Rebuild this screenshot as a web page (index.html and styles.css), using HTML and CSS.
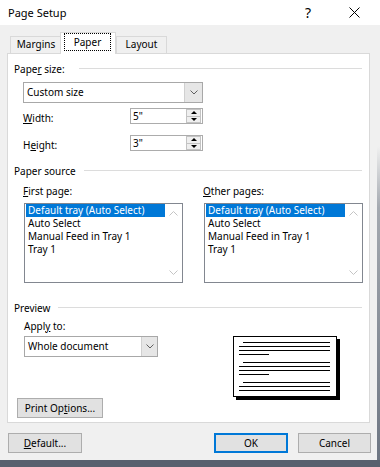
FILE: index.html
```html
<!DOCTYPE html>
<html lang="en">
<head>
<meta charset="utf-8">
<title>Page Setup</title>
<link rel="stylesheet" href="styles.css">
</head>
<body>
<div class="dialog">
  <div class="titlebar">
    <span class="title">Page Setup</span>
    <div class="caption-btns">
      <span class="cap-btn help">?</span>
      <span class="cap-btn close"><svg width="11" height="11" viewBox="0 0 11 11"><path d="M0.5 0.5L10.5 10.5M10.5 0.5L0.5 10.5" stroke="#000" stroke-width="1" fill="none"/></svg></span>
    </div>
  </div>
  <div class="main">
    <div class="tabs">
      <div class="tab tab-margins">Margins</div>
      <div class="tab tab-paper active"><span class="focus">Paper</span></div>
      <div class="tab tab-layout">Layout</div>
    </div>
    <div class="panel">
      <div class="group-head"><span>Pape<u>r</u> size:</span><i class="rule rule-wide"></i></div>
      <div class="combo combo-size">
        <span class="combo-text">Custom size</span>
        <span class="combo-btn"><svg width="8" height="5" viewBox="0 0 8 5"><path d="M0.5 0.5L4 4L7.5 0.5" stroke="#606060" fill="none"/></svg></span>
      </div>
      <div class="field-row row-width">
        <span class="field-label"><u>W</u>idth:</span>
        <div class="spin">
          <span class="spin-text">5&quot;</span>
          <span class="spin-btns"><span class="spin-btn"><i class="tri-up"></i></span><span class="spin-btn"><i class="tri-down"></i></span></span>
        </div>
      </div>
      <div class="field-row row-height">
        <span class="field-label">H<u>e</u>ight:</span>
        <div class="spin">
          <span class="spin-text">3&quot;</span>
          <span class="spin-btns"><span class="spin-btn"><i class="tri-up"></i></span><span class="spin-btn"><i class="tri-down"></i></span></span>
        </div>
      </div>

      <div class="group-head head-source"><span>Paper source</span><i class="rule"></i></div>
      <div class="source-cols">
        <div class="source-col">
          <div class="sub-label"><u>F</u>irst page:</div>
          <div class="list">
            <div class="list-items">
              <div class="item sel">Default tray (Auto Select)</div>
              <div class="item">Auto Select</div>
              <div class="item">Manual Feed in Tray 1</div>
              <div class="item">Tray 1</div>
            </div>
            <div class="vscroll">
              <svg width="9" height="5" viewBox="0 0 9 5"><path d="M0.5 4.5L4.5 0.5L8.5 4.5" stroke="#c4c4c4" fill="none"/></svg>
              <svg width="9" height="5" viewBox="0 0 9 5"><path d="M0.5 0.5L4.5 4.5L8.5 0.5" stroke="#c4c4c4" fill="none"/></svg>
            </div>
          </div>
        </div>
        <div class="source-col">
          <div class="sub-label"><u>O</u>ther pages:</div>
          <div class="list">
            <div class="list-items">
              <div class="item sel">Default tray (Auto Select)</div>
              <div class="item">Auto Select</div>
              <div class="item">Manual Feed in Tray 1</div>
              <div class="item">Tray 1</div>
            </div>
            <div class="vscroll">
              <svg width="9" height="5" viewBox="0 0 9 5"><path d="M0.5 4.5L4.5 0.5L8.5 4.5" stroke="#c4c4c4" fill="none"/></svg>
              <svg width="9" height="5" viewBox="0 0 9 5"><path d="M0.5 0.5L4.5 4.5L8.5 0.5" stroke="#c4c4c4" fill="none"/></svg>
            </div>
          </div>
        </div>
      </div>

      <div class="group-head head-preview"><span>Preview</span><i class="rule"></i></div>
      <div class="preview-row">
        <div class="preview-left">
          <div class="apply-label">Appl<u>y</u> to:</div>
          <div class="combo combo-apply">
            <span class="combo-text">Whole document</span>
            <span class="combo-btn"><svg width="8" height="5" viewBox="0 0 8 5"><path d="M0.5 0.5L4 4L7.5 0.5" stroke="#606060" fill="none"/></svg></span>
          </div>
          <div class="btn btn-print">Print Op<u>t</u>ions...</div>
        </div>
        <div class="preview-page">
          <svg width="102" height="59" viewBox="0 0 102 59" shape-rendering="crispEdges">
            <g stroke="#000" stroke-width="1">
              <path d="M9 5.5H96M5 9.5H96M5 13.5H96M5 17.5H35"/>
              <path d="M9 25.5H96M5 29.5H96M5 33.5H96M5 37.5H35"/>
              <path d="M9 45.5H96M5 49.5H96M5 53.5H96"/>
            </g>
          </svg>
        </div>
      </div>
    </div>
    <div class="footer">
      <div class="btn btn-default"><u>D</u>efault...</div>
      <div class="btn btn-ok">OK</div>
      <div class="btn btn-cancel">Cancel</div>
    </div>
  </div>
</div>
</body>
</html>
```

FILE: styles.css
```css
html, body {
  margin: 0;
  padding: 0;
}

body {
  width: 380px;
  height: 467px;
  overflow: hidden;
  background: #58606e;
  font-family: "Noto Sans", "DejaVu Sans", sans-serif;
  font-size: 10px;
  color: #000;
}

u {
  text-decoration: underline;
  text-underline-offset: 1px;
}

.dialog {
  width: 380px;
  height: 460px;
  background: #f0f0f0;
  display: flex;
  flex-direction: column;
}

/* title bar */
.titlebar {
  height: 25px;
  flex-shrink: 0;
  background: #fff;
  display: flex;
  align-items: center;
}

.title {
  flex: 1;
  padding-left: 8px;
  font-size: 11px;
  line-height: 25px;
}

.caption-btns {
  display: flex;
  padding-right: 3px;
}

.cap-btn {
  width: 46px;
  height: 25px;
  display: flex;
  align-items: center;
  justify-content: center;
}

.help {
  font-size: 14px;
  line-height: 25px;
}

/* main area */
.main {
  flex: 1;
  display: flex;
  flex-direction: column;
  border-right: 3px solid #f0f0f0;
  border-image: linear-gradient(to bottom, #f0f0f0 0%, #f0f0f0 28%, #a4a9b0 42%, #6d7582 100%) 1;
}

.tabs {
  display: flex;
  align-items: flex-end;
  height: 22px;
  margin-top: 7px;
  margin-bottom: -1px;
  padding-left: 10px;
  position: relative;
  z-index: 1;
}

.tab {
  box-sizing: border-box;
  height: 17px;
  margin-bottom: 1px;
  border: 1px solid #d9d9d9;
  border-bottom: none;
  background: #f0f0f0;
  text-align: center;
  line-height: 15px;
}

.tab-margins {
  width: 52px;
}

.tab-paper {
  width: 52px;
}

.tab-layout {
  width: 51px;
  margin-left: 0;
}

.tab.active {
  width: 56px;
  height: 22px;
  margin: 0 0 0 -2px;
  background: #fff;
  display: flex;
  padding: 0 4px 0 3px;
  position: relative;
  z-index: 2;
}

.focus {
  flex: 1;
  height: 16px;
  border: 1px dotted #000;
  line-height: 16px;
  text-align: center;
}

.tab-layout {
  margin-left: 0;
}

/* panel */
.panel {
  box-sizing: border-box;
  height: 370px;
  margin: 0 7px;
  background: #fff;
  border: 1px solid #d9d9d9;
  flex-shrink: 0;
}

.group-head {
  display: flex;
  align-items: center;
  margin: 8px 7px 0 6px;
  line-height: 14px;
  height: 14px;
}

.rule {
  flex: 1;
  height: 1px;
  background: #dcdcdc;
  margin-left: 8px;
  margin-top: -1px;
}

.rule-wide {
  margin-left: 14px;
}

.head-source {
  margin-top: 13px;
}

.head-preview {
  margin-top: 18px;
}

/* combos */
.combo {
  display: flex;
  box-sizing: border-box;
  height: 21px;
  border: 1px solid #a8a8a8;
  background: #fff;
}

.combo-text {
  flex: 1;
  padding-left: 3px;
  line-height: 19px;
  white-space: nowrap;
}

.combo-btn {
  width: 17px;
  background: #e6e6e6;
  border-left: 1px solid #d0d0d0;
  display: flex;
  align-items: center;
  justify-content: center;
}

.combo-size {
  width: 180px;
  margin: 6px 0 0 15px;
}

.combo-apply {
  width: 134px;
  margin: 3px 0 0 7px;
}

.combo-apply .combo-btn {
  width: 15px;
}

/* spin fields */
.field-row {
  display: flex;
  align-items: flex-start;
  margin-left: 15px;
  height: 16px;
}

.row-width {
  margin-top: 5px;
}

.row-height {
  margin-top: 11px;
}

.field-label {
  width: 107px;
  line-height: 16px;
  padding-top: 2px;
}

.spin {
  display: flex;
  box-sizing: border-box;
  width: 73px;
  height: 16px;
  border: 1px solid #acacac;
  background: #fff;
}

.spin-text {
  flex: 1;
  padding-left: 2px;
  line-height: 14px;
}

.spin-btns {
  width: 15px;
  display: flex;
  flex-direction: column;
  padding-right: 1px;
}

.spin-btn {
  flex: 1;
  display: flex;
  align-items: center;
  justify-content: center;
  background: #efefef;
  border: 1px solid #c3c3c3;
  box-sizing: border-box;
}

.spin-btn + .spin-btn {
  border-top: none;
}

.tri-up {
  width: 0;
  height: 0;
  border-left: 3px solid transparent;
  border-right: 3px solid transparent;
  border-bottom: 3px solid #000;
}

.tri-down {
  width: 0;
  height: 0;
  border-left: 3px solid transparent;
  border-right: 3px solid transparent;
  border-top: 3px solid #000;
}

/* paper source lists */
.source-cols {
  display: flex;
  gap: 21px;
  margin-left: 16px;
  margin-top: 6px;
}

.source-col {
  width: 159px;
}

.sub-label {
  line-height: 14px;
  margin-bottom: 5px;
  margin-left: -1px;
}

.list {
  box-sizing: border-box;
  width: 159px;
  height: 80px;
  border: 1px solid #828790;
  background: #fff;
  display: flex;
}

.list-items {
  flex: 1;
  padding-left: 1px;
}

.item {
  height: 13px;
  line-height: 13px;
  padding-left: 2px;
  white-space: nowrap;
}

.item.sel {
  background: #0078d7;
  color: #fff;
}

.vscroll {
  width: 17px;
  display: flex;
  flex-direction: column;
  justify-content: space-between;
  align-items: center;
  padding: 7px 0 7px;
  box-sizing: border-box;
}

/* preview */
.preview-row {
  display: flex;
  align-items: flex-start;
  padding-left: 9px;
  margin-top: 4px;
}

.preview-left {
  width: 141px;
}

.apply-label {
  line-height: 14px;
  margin-left: 7px;
}

.preview-page {
  box-sizing: border-box;
  width: 104px;
  height: 61px;
  margin: 17px 0 0 75px;
  border: 1px solid #000;
  background: #fff;
  box-shadow: 3px 3px 0 #000;
}

.preview-page svg {
  display: block;
}

/* buttons */
.btn {
  box-sizing: border-box;
  height: 20px;
  border: 1px solid #adadad;
  background: #e1e1e1;
  text-align: center;
  line-height: 18px;
  white-space: nowrap;
}

.btn-print {
  width: 86px;
  margin-top: 41px;
}

.footer {
  display: flex;
  padding: 10px 6px 0 8px;
}

.btn-default {
  width: 74px;
}

.btn-ok {
  width: 74px;
  margin-left: auto;
  border: 2px solid #0078d7;
  line-height: 16px;
}

.btn-cancel {
  width: 73px;
  margin-left: 10px;
}
```
